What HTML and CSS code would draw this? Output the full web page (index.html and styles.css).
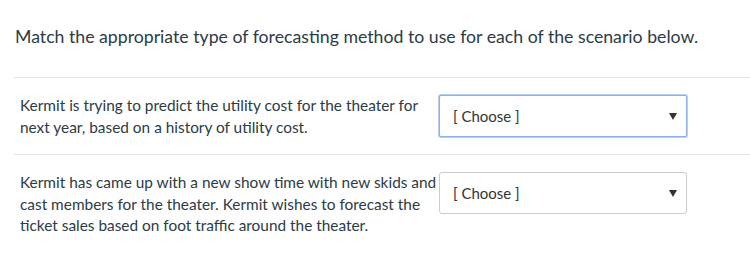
FILE: index.html
```html
<!DOCTYPE html>
<html lang="en">
<head>
  <meta charset="UTF-8">
  <meta name="viewport" content="width=device-width, initial-scale=1.0">
  <title>Matching question</title>
  <link rel="stylesheet" href="styles.css">
</head>
<body>

  <div class="question">
    <p class="prompt">Match the appropriate type of forecasting method to use for each of the scenario below.</p>

    <div class="match-row">
      <div class="scenario">Kermit is trying to predict the utility cost for the theater for next year, based on a history of utility cost.</div>
      <div class="pick">
        <select class="choose focused">
          <option>[ Choose ]</option>
        </select>
        <span class="arrow"></span>
      </div>
    </div>

    <div class="match-row">
      <div class="scenario">Kermit has came up with a new show time with new skids and cast members for the theater. Kermit wishes to forecast the ticket sales based on foot traffic around the theater.</div>
      <div class="pick">
        <select class="choose">
          <option>[ Choose ]</option>
        </select>
        <span class="arrow"></span>
      </div>
    </div>
  </div>

</body>
</html>
```

FILE: styles.css
```css
body {
  margin: 0;
  background: #fff;
  color: #2d3b45;
  font-family: Lato, 'Open Sans', sans-serif;
}
.question {
  padding-left: 14px;
}
.prompt {
  margin: 0;
  padding: 26px 0 29px 1px;
  font-size: 17.7px;
  line-height: 22px;
  border-bottom: 1px solid #e2e4e6;
}
.match-row {
  display: flex;
  align-items: flex-start;
  padding: 17px 0 16px 6px;
  border-bottom: 1px solid #e2e4e6;
}
.match-row:last-child {
  border-bottom: none;
}
.scenario {
  width: 419px;
  font-size: 15.4px;
  line-height: 21.5px;
}
.pick {
  position: relative;
  width: 248px;
}
.choose {
  display: block;
  width: 100%;
  height: 42px;
  padding: 0 30px 0 13px;
  border: 1px solid #c7cdd1;
  border-radius: 3px;
  background: #fff;
  color: #333;
  font-family: Lato, 'Open Sans', sans-serif;
  font-size: 15px;
  appearance: none;
  -webkit-appearance: none;
}
.choose.focused {
  border-color: #8fb0ea;
  border-radius: 2px;
  box-shadow: 0 0 0 1px #b8cdf3;
}
.arrow {
  position: absolute;
  right: 10px;
  top: 18px;
  width: 0;
  height: 0;
  border-left: 4px solid transparent;
  border-right: 4px solid transparent;
  border-top: 7px solid #333;
}
```
